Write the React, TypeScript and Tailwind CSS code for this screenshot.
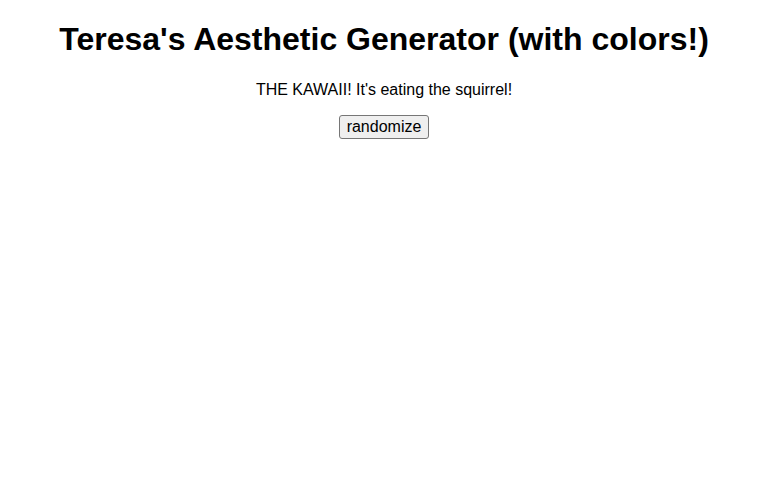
import React from "react";

export default function App() {
  return (
    <div className="text-center text-black bg-white" style={{ fontFamily: '"Liberation Sans", Arial, sans-serif' }}>
      <h1 className="text-[32px] font-bold leading-[37px] pt-[21px] mb-[23px]">Teresa's Aesthetic Generator (with colors!)</h1>
      <p className="text-[16px] leading-[18px] mb-[16px]">THE KAWAII! It's eating the squirrel!</p>
      <button className="text-[16px] leading-[18px] px-[7px] py-[2px] border border-[#767676] bg-[#efefef] rounded-[3px] text-black">randomize</button>
    </div>
  );
}
